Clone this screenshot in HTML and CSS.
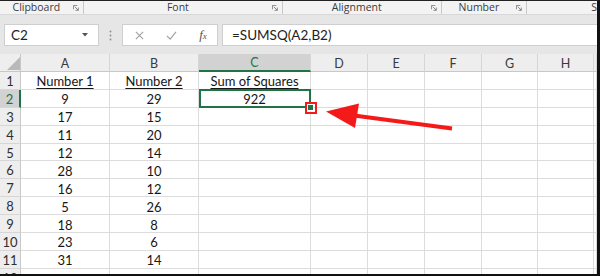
FILE: index.html
```html
<!DOCTYPE html>
<html>
<head>
<meta charset="utf-8">
<link rel="stylesheet" href="styles.css">
</head>
<body>
<div class="screen">
  <div class="ribbon">
    <div class="grp g1"><span class="lbl">Clipboard</span><svg class="launch" viewBox="0 0 7 7"><path d="M0.5 5V0.5H5" /><path d="M2 2L6 6M6.2 3V6.2H3" /></svg></div>
    <div class="grp g2"><span class="lbl">Font</span><svg class="launch" viewBox="0 0 7 7"><path d="M0.5 5V0.5H5" /><path d="M2 2L6 6M6.2 3V6.2H3" /></svg></div>
    <div class="grp g3"><span class="lbl">Alignment</span><svg class="launch" viewBox="0 0 7 7"><path d="M0.5 5V0.5H5" /><path d="M2 2L6 6M6.2 3V6.2H3" /></svg></div>
    <div class="grp g4"><span class="lbl">Number</span><svg class="launch" viewBox="0 0 7 7"><path d="M0.5 5V0.5H5" /><path d="M2 2L6 6M6.2 3V6.2H3" /></svg></div>
    <div class="grp g5"><span class="lbl">S</span></div>
  </div>
  <div class="fbar">
    <div class="namebox"><span>C2</span><svg class="dd" viewBox="0 0 6 4"><path d="M0 0H6L3 3.5Z" /></svg></div>
    <div class="dots"><svg viewBox="0 0 3 11"><circle cx="1.5" cy="1.5" r="0.9"/><circle cx="1.5" cy="5.5" r="0.9"/><circle cx="1.5" cy="9.5" r="0.9"/></svg></div>
    <div class="fxbox">
      <span class="ico"><svg class="xmark" viewBox="0 0 10 10"><path d="M1 1L9 9M9 1L1 9" /></svg></span>
      <span class="ico"><svg class="check" viewBox="0 0 12 10"><path d="M1 5.5L4.5 9L11 1" /></svg></span>
      <span class="ico"><span class="fx">f<span class="fxx">x</span></span></span>
    </div>
    <div class="formula">=SUMSQ(A2,B2)</div>
  </div>
  <div class="sheet">
    <div class="ch corner"><svg class="tri" viewBox="0 0 21 18"><path d="M7 16L20 3V16Z" /></svg></div>
    <div class="ch">A</div><div class="ch">B</div><div class="ch csel">C</div><div class="ch">D</div><div class="ch">E</div><div class="ch">F</div><div class="ch">G</div><div class="ch">H</div><div class="ch"></div>

    <div class="rh">1</div><div class="c"><u>Number 1</u></div><div class="c"><u>Number 2</u></div><div class="c"><u>Sum of Squares</u></div><div class="c"></div><div class="c"></div><div class="c"></div><div class="c"></div><div class="c"></div><div class="c"></div>
    <div class="rh rsel">2</div><div class="c">9</div><div class="c">29</div><div class="c sel">922</div><div class="c"></div><div class="c"></div><div class="c"></div><div class="c"></div><div class="c"></div><div class="c"></div>
    <div class="rh">3</div><div class="c">17</div><div class="c">15</div><div class="c"></div><div class="c"></div><div class="c"></div><div class="c"></div><div class="c"></div><div class="c"></div><div class="c"></div>
    <div class="rh">4</div><div class="c">11</div><div class="c">20</div><div class="c"></div><div class="c"></div><div class="c"></div><div class="c"></div><div class="c"></div><div class="c"></div><div class="c"></div>
    <div class="rh">5</div><div class="c">12</div><div class="c">14</div><div class="c"></div><div class="c"></div><div class="c"></div><div class="c"></div><div class="c"></div><div class="c"></div><div class="c"></div>
    <div class="rh">6</div><div class="c">28</div><div class="c">10</div><div class="c"></div><div class="c"></div><div class="c"></div><div class="c"></div><div class="c"></div><div class="c"></div><div class="c"></div>
    <div class="rh">7</div><div class="c">16</div><div class="c">12</div><div class="c"></div><div class="c"></div><div class="c"></div><div class="c"></div><div class="c"></div><div class="c"></div><div class="c"></div>
    <div class="rh">8</div><div class="c">5</div><div class="c">26</div><div class="c"></div><div class="c"></div><div class="c"></div><div class="c"></div><div class="c"></div><div class="c"></div><div class="c"></div>
    <div class="rh">9</div><div class="c">18</div><div class="c">8</div><div class="c"></div><div class="c"></div><div class="c"></div><div class="c"></div><div class="c"></div><div class="c"></div><div class="c"></div>
    <div class="rh">10</div><div class="c">23</div><div class="c">6</div><div class="c"></div><div class="c"></div><div class="c"></div><div class="c"></div><div class="c"></div><div class="c"></div><div class="c"></div>
    <div class="rh">11</div><div class="c">31</div><div class="c">14</div><div class="c"></div><div class="c"></div><div class="c"></div><div class="c"></div><div class="c"></div><div class="c"></div><div class="c"></div>
    <div class="rh">12</div><div class="c"></div><div class="c"></div><div class="c"></div><div class="c"></div><div class="c"></div><div class="c"></div><div class="c"></div><div class="c"></div><div class="c"></div>
  </div>
  <svg class="annot" viewBox="0 0 600 276">
    <rect x="307" y="104" width="7" height="7" class="handlebg" />
    <rect x="308" y="105" width="5" height="5" class="handle" />
    <rect x="306" y="103" width="10" height="10" class="redbox" />
    <line x1="354" y1="115.5" x2="452" y2="128.5" class="redline" />
    <path d="M326 111.5L359 103.5L355 128Z" class="redhead" />
  </svg>
</div>
</body>
</html>
```
FILE: styles.css
```css
body {
  margin: 0;
}

.screen {
  position: relative;
  width: 600px;
  height: 276px;
  box-sizing: border-box;
  border-top: 1px solid #222;
  border-right: 3px solid #111;
  border-bottom: 2px solid #111;
  background: #e6e6e6;
  overflow: hidden;
  font-family: Lato, "Liberation Sans", sans-serif;
}

/* ribbon group labels */
.ribbon {
  display: flex;
  height: 14px;
  box-sizing: border-box;
  background: #f3f3f3;
  border-bottom: 1px solid #d8d8d8;
  font-family: "Open Sans", "Liberation Sans", sans-serif;
  font-size: 10.5px;
  color: #3c3c3c;
}

.grp {
  display: flex;
  align-items: center;
  box-sizing: border-box;
  height: 13px;
  border-right: 1px solid #c8c8c8;
}

.g1 { width: 84px; }
.g2 { width: 200px; }
.g3 { width: 159px; }
.g4 { width: 86px; }
.g5 {
  flex: 1;
  border-right: none;
  padding-left: 64px;
}

.lbl {
  flex: 1;
  text-align: center;
  line-height: 13px;
}

.g5 .lbl {
  text-align: left;
}

.launch {
  width: 6px;
  height: 6px;
  margin-right: 4px;
  fill: none;
  stroke: #777;
  stroke-width: 1;
}

/* formula bar */
.fbar {
  display: flex;
  align-items: center;
  height: 39px;
  box-sizing: border-box;
  padding: 9px 0 8px 4px;
}

.namebox {
  width: 95px;
  height: 22px;
  box-sizing: border-box;
  background: #fff;
  border: 1px solid #cfcfcf;
  display: flex;
  align-items: center;
  justify-content: space-between;
  padding: 0 10px 0 6px;
  font-size: 13.5px;
  color: #222;
}

.dd {
  width: 6px;
  height: 4px;
  fill: #555;
}

.dots {
  width: 23px;
  display: flex;
  justify-content: center;
  align-items: center;
}

.dots svg {
  width: 3px;
  height: 11px;
  fill: #8a8a8a;
}

.fxbox {
  width: 96px;
  height: 22px;
  box-sizing: border-box;
  background: #fff;
  border: 1px solid #cfcfcf;
  display: grid;
  grid-template-columns: 32px 32px 32px;
  align-items: center;
  justify-items: center;
}

.ico {
  display: flex;
  align-items: center;
  justify-content: center;
}

.xmark {
  width: 9px;
  height: 9px;
  fill: none;
  stroke: #a0a0a0;
  stroke-width: 1.2;
}

.check {
  width: 11px;
  height: 9px;
  fill: none;
  stroke: #a0a0a0;
  stroke-width: 1.3;
}

.fx {
  font-family: "Liberation Serif", serif;
  font-style: italic;
  font-size: 13px;
  color: #555;
}

.fxx {
  font-size: 9px;
}

.formula {
  flex: 1;
  margin-left: 4px;
  height: 22px;
  box-sizing: border-box;
  background: #fff;
  border: 1px solid #cfcfcf;
  border-right: none;
  display: flex;
  align-items: center;
  padding-left: 9px;
  font-size: 13.5px;
  color: #222;
}

/* sheet grid */
.sheet {
  display: grid;
  grid-template-columns: 21px 89px 89px 112px 57px 57px 57px 56px 56px 1fr;
  grid-template-rows: 18px repeat(12, 17.9px);
  height: 220px;
  overflow: hidden;
  background: #fff;
}

.ch {
  background: #eeeeee;
  box-sizing: border-box;
  border-right: 1px solid #d6d6d6;
  border-bottom: 1px solid #c8c8c8;
  display: flex;
  align-items: center;
  justify-content: center;
  font-size: 12.5px;
  color: #3a3a3a;
  padding-top: 1px;
}

.corner {
  position: relative;
  border-right: 1px solid #c8c8c8;
}

.tri {
  position: absolute;
  left: 0;
  top: 0;
  width: 21px;
  height: 18px;
  fill: #b9b9b9;
}

.csel {
  background: #d2d2d2;
  color: #217346;
  border-bottom: 2px solid #217346;
}

.rh {
  background: #eeeeee;
  box-sizing: border-box;
  border-right: 1px solid #c8c8c8;
  border-bottom: 1px solid #d6d6d6;
  display: flex;
  align-items: center;
  justify-content: center;
  font-size: 13px;
  color: #2e2e2e;
  padding-top: 1px;
}

.rsel {
  background: #d2d2d2;
  color: #217346;
  border-right: 2px solid #217346;
}

.c {
  box-sizing: border-box;
  border-right: 1px solid #dcdcdc;
  border-bottom: 1px solid #dcdcdc;
  display: flex;
  align-items: center;
  justify-content: center;
  font-size: 13px;
  color: #161616;
  padding-top: 2px;
}

.c u {
  text-decoration-thickness: 1px;
  text-underline-offset: 2px;
}

.sel {
  position: relative;
}

.sel::before {
  content: "";
  position: absolute;
  top: -1px;
  left: 0;
  right: -1px;
  bottom: -1px;
  border: 2px solid #217346;
}

/* annotation overlay */
.annot {
  position: absolute;
  left: 0;
  top: -1px;
  width: 600px;
  height: 276px;
  pointer-events: none;
  z-index: 3;
}

.handlebg {
  fill: #fff;
}

.handle {
  fill: #217346;
}

.redbox {
  fill: none;
  stroke: #f41a1a;
  stroke-width: 2;
}

.redline {
  stroke: #f41a1a;
  stroke-width: 4;
}

.redhead {
  fill: #f41a1a;
}
```
